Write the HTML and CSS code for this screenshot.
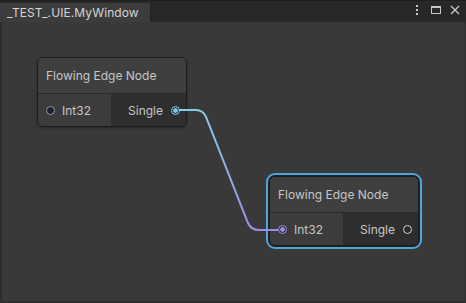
FILE: index.html
```html
<!DOCTYPE html>
<html>
<head>
<meta charset="utf-8">
<link rel="stylesheet" href="styles.css">
</head>
<body>
<div class="window">
  <div class="tabbar">
    <div class="tab">_TEST_.UIE.MyWindow</div>
    <div class="tools">
      <svg class="ico kebab" width="6" height="12" viewBox="0 0 6 12"><rect x="2" y="1" width="2" height="2" fill="#c8c8c8"/><rect x="2" y="5" width="2" height="2" fill="#c8c8c8"/><rect x="2" y="9" width="2" height="2" fill="#c8c8c8"/></svg>
      <svg class="ico" width="12" height="12" viewBox="0 0 12 12"><rect x="1.5" y="2.5" width="9" height="7" fill="none" stroke="#c8c8c8" stroke-width="1"/><rect x="1.5" y="2.5" width="9" height="1.5" fill="#c8c8c8"/></svg>
      <svg class="ico" width="12" height="12" viewBox="0 0 12 12"><path d="M2 2 L10 10 M10 2 L2 10" stroke="#c8c8c8" stroke-width="1.3"/></svg>
    </div>
  </div>
  <div class="graph">
    <svg class="edges" width="466" height="303" viewBox="0 0 466 303">
      <defs>
        <linearGradient id="eg" gradientUnits="userSpaceOnUse" x1="180" y1="110" x2="280" y2="230">
          <stop offset="0" stop-color="#86d0ec"/>
          <stop offset="1" stop-color="#9c88e2"/>
        </linearGradient>
      </defs>
      <path d="M179 110 L196 110 Q203 110 206 117 L248 223 Q251 230 259 230 L279 230" fill="none" stroke="url(#eg)" stroke-width="2"/>
    </svg>
    <div class="node n1">
      <div class="title">Flowing Edge Node</div>
      <div class="ports">
        <div class="port in"><span class="dot dot-in-idle"></span><span>Int32</span></div>
        <div class="port out"><span>Single</span><span class="dot dot-out-on"></span></div>
      </div>
    </div>
    <div class="node n2 selected">
      <div class="title">Flowing Edge Node</div>
      <div class="ports">
        <div class="port in"><span class="dot dot-in-on"></span><span>Int32</span></div>
        <div class="port out"><span>Single</span><span class="dot dot-out-idle"></span></div>
      </div>
    </div>
  </div>
</div>
</body>
</html>
```
FILE: styles.css
```css
* { box-sizing: border-box; }
html, body { margin: 0; padding: 0; background: #282828; }
body { font-family: Inter, "Noto Sans", sans-serif; }
.window { width: 466px; height: 303px; display: flex; flex-direction: column; overflow: hidden; }
.tabbar { height: 22px; background: #282828; display: flex; align-items: flex-end; justify-content: space-between; border-top: 1px solid #1f1f1f; }
.tab { width: 151px; height: 19px; background: #3c3c3c; color: #d4d4d4; font-size: 12px; line-height: 19px; padding-left: 7px; letter-spacing: 0.1px; border-right: 1px solid #222; }
.tools { display: flex; align-items: center; gap: 7px; height: 21px; padding-right: 5px; padding-bottom: 3px; }
.kebab { margin-right: 3px; }
.ico { display: block; }
.graph { flex: 1; position: relative; background: #393939; border-left: 2px solid #2e2e2e; border-right: 1px solid #2e2e2e; border-bottom: 2px solid #2e2e2e; }
.edges { position: absolute; left: -2px; top: -22px; z-index: 2; pointer-events: none; }
.node { position: absolute; width: 150px; height: 70px; border: 1px solid #1c1c1c; border-radius: 6px; background: #3c3c3c; display: flex; flex-direction: column; overflow: hidden; z-index: 1; box-shadow: 0 1px 3px rgba(0,0,0,0.35); }
.n1 { left: 35px; top: 35px; }
.n2 { left: 267px; top: 154px; }
.selected { box-shadow: 0 0 0 1px #232323, 0 0 0 3px #4ca6dc; }
.title { height: 36px; background: #3f3f3f; color: #c6c6c6; font-size: 12px; line-height: 36px; padding-left: 8px; border-bottom: 1px solid #2a2a2a; }
.ports { flex: 1; display: flex; }
.port { display: flex; align-items: center; color: #c6c6c6; font-size: 12px; }
.port.in { width: 73px; background: #3c3c3c; padding-left: 8px; gap: 7px; }
.port.out { flex: 1; background: #2e2e2e; justify-content: flex-end; padding-right: 6px; gap: 8px; }
.dot { width: 9px; height: 9px; border-radius: 50%; display: block; flex: none; }
.dot-in-idle { border: 1.5px solid #9494b8; background: #1f1f29; }
.dot-out-on { border: 1.5px solid #7cc6e8; background: radial-gradient(circle, #7cc6e8 0 2px, #2a3a44 2.5px); }
.dot-in-on { border: 1.5px solid #9b94dc; background: radial-gradient(circle, #9b94dc 0 2px, #2c2a3c 2.5px); }
.dot-out-idle { border: 1.5px solid #cfcfcf; background: #2a2a2a; }
```
